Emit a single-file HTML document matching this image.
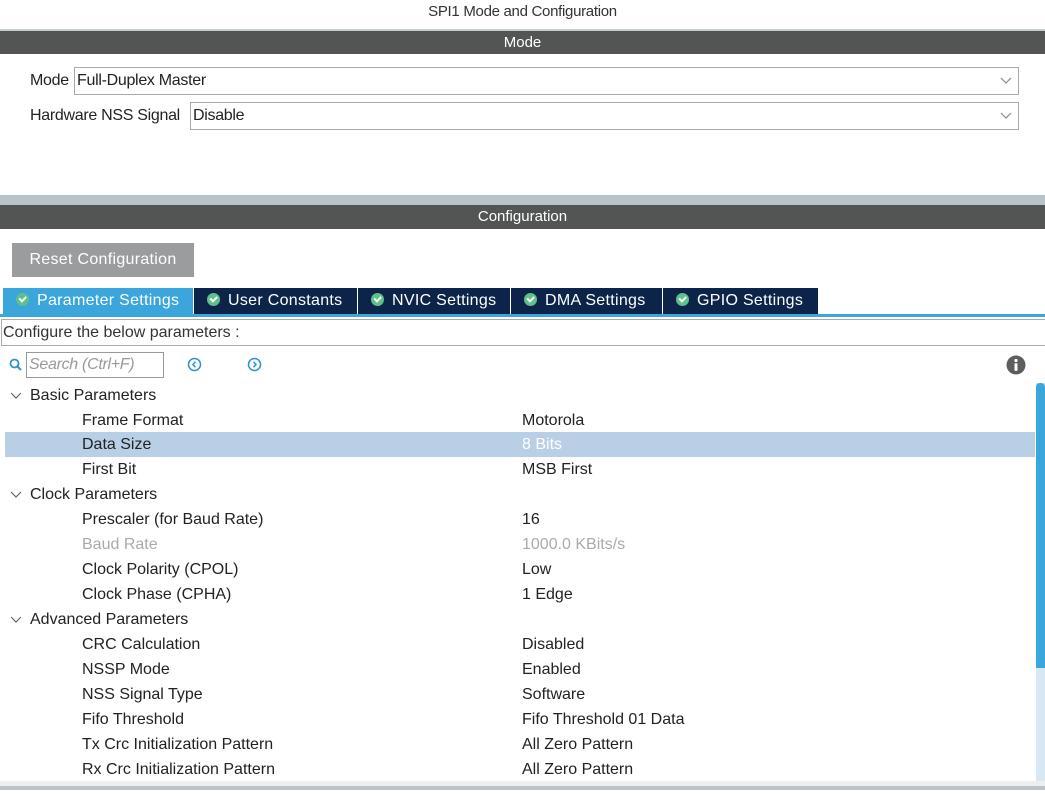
<!DOCTYPE html>
<html><head><meta charset="utf-8"><style>
*{margin:0;padding:0;box-sizing:border-box}
body{width:1045px;height:797px;background:#fff;font-family:"Liberation Sans",sans-serif;color:#222;position:relative;overflow:hidden;font-size:16px}
.a{position:absolute}
.bar{position:absolute;left:0;width:1045px;background:#535554;color:#fff;text-align:center;font-size:15px}
.sel{position:absolute;border:1px solid #a9a9a9;background:#fff;font-size:16px;padding-left:2px;line-height:25px;letter-spacing:-.3px}
.sel svg{position:absolute;right:6px;top:9px}
.tab{position:absolute;top:288px;height:26px;background:#0c2449;color:#fff;font-size:16px;line-height:26px;letter-spacing:.3px}
.tab i{display:inline-block;width:13px;height:13px;border-radius:50%;background:#5fc18a;vertical-align:-1px;margin:0 8px 0 13px;position:relative}
.tab i:after{content:"";position:absolute;left:3px;top:3px;width:5px;height:2.5px;border-left:2px solid #fff;border-bottom:2px solid #fff;transform:rotate(-45deg)}
.row{position:absolute;left:5px;width:1030px;height:25px;line-height:25px;font-size:16px}
.row .l{position:absolute;left:77px}
.row .v{position:absolute;left:517px}
.g .l{left:25px}
.g svg{position:absolute;left:5px;top:9px}
.dis{color:#aaa}
</style></head><body>
<div class="a" style="top:3px;width:1045px;text-align:center;font-size:15px;color:#333;letter-spacing:-.3px">SPI1 Mode and Configuration</div>
<div class="a" style="top:29px;left:0;width:1045px;height:2px;background:#c8cdd0"></div>
<div class="bar" style="top:31px;height:23px;line-height:23px">Mode</div>
<div class="a" style="left:30px;top:72px;letter-spacing:-.3px">Mode</div>
<div class="sel" style="left:74px;top:67px;width:945px;height:28px">Full-Duplex Master<svg width="12" height="8"><path d="M1 1L6 6L11 1" fill="none" stroke="#888" stroke-width="1.2"/></svg></div>
<div class="a" style="left:30px;top:107px;letter-spacing:-.3px">Hardware NSS Signal</div>
<div class="sel" style="left:190px;top:102px;width:829px;height:28px">Disable<svg width="12" height="8"><path d="M1 1L6 6L11 1" fill="none" stroke="#888" stroke-width="1.2"/></svg></div>
<div class="a" style="top:195px;left:0;width:1045px;height:10px;background:#b9c3ca"></div>
<div class="bar" style="top:205px;height:24px;line-height:24px">Configuration</div>
<div class="a" style="left:12px;top:243px;width:182px;height:34px;background:#9a9c9e;color:#fff;text-align:center;line-height:33px;letter-spacing:.3px">Reset Configuration</div>
<div class="tab" style="left:3px;width:190px;background:#3ba6db"><i></i>Parameter Settings</div>
<div class="tab" style="left:194px;width:163px"><i></i>User Constants</div>
<div class="tab" style="left:358px;width:152px"><i></i>NVIC Settings</div>
<div class="tab" style="left:511px;width:151px"><i></i>DMA Settings</div>
<div class="tab" style="left:663px;width:155px"><i></i>GPIO Settings</div>
<div class="a" style="top:314px;left:0;width:1045px;height:3px;background:#3ba6db"></div>
<div class="a" style="top:319px;left:1px;width:1050px;height:27px;border:1px solid #aaa;line-height:25px;padding-left:1px;color:#333">Configure the below parameters :</div>
<svg class="a" style="left:9px;top:358px" width="14" height="14"><circle cx="5.5" cy="5.5" r="4" fill="none" stroke="#2f8fd0" stroke-width="1.8"/><line x1="8.5" y1="8.5" x2="12" y2="12" stroke="#2f8fd0" stroke-width="2"/></svg>
<div class="a" style="left:26px;top:352px;width:138px;height:26px;border:1px solid #999;font-style:italic;color:#999;line-height:24px;padding-left:2px;letter-spacing:-.3px">Search (Ctrl+F)</div>
<svg class="a" style="left:187px;top:357px" width="15" height="15"><circle cx="7.5" cy="7.5" r="6" fill="none" stroke="#2f8fd0" stroke-width="1.5"/><path d="M8.5 4.8 L6 7.5 L8.5 10.2" fill="none" stroke="#2f8fd0" stroke-width="1.5"/></svg>
<svg class="a" style="left:247px;top:357px" width="15" height="15"><circle cx="7.5" cy="7.5" r="6" fill="none" stroke="#2f8fd0" stroke-width="1.5"/><path d="M6.5 4.8 L9 7.5 L6.5 10.2" fill="none" stroke="#2f8fd0" stroke-width="1.5"/></svg>
<svg class="a" style="left:1006px;top:355px" width="20" height="20"><circle cx="10" cy="10" r="9.5" fill="#5e5e5e"/><circle cx="10" cy="5.5" r="1.6" fill="#fff"/><rect x="8.5" y="8.3" width="3" height="7.5" fill="#fff"/></svg>
<div class="a" style="left:1036px;top:383px;width:9px;height:398px;background:#d8e7f4"></div>
<div class="a" style="left:1036px;top:383px;width:9px;height:285px;background:#3ba6db;border-radius:4px 4px 0 0"></div>
<div class="row g" style="top:383px"><svg width="12" height="8"><path d="M1 1L6 6L11 1" fill="none" stroke="#666" stroke-width="1.2"/></svg><span class="l">Basic Parameters</span></div>
<div class="row" style="top:408px"><span class="l">Frame Format</span><span class="v">Motorola</span></div>
<div class="row" style="top:432px;background:#b8cfe6"><span class="l">Data Size</span><span class="v" style="color:#fff">8 Bits</span></div>
<div class="row" style="top:457px"><span class="l">First Bit</span><span class="v">MSB First</span></div>
<div class="row g" style="top:482px"><svg width="12" height="8"><path d="M1 1L6 6L11 1" fill="none" stroke="#666" stroke-width="1.2"/></svg><span class="l">Clock Parameters</span></div>
<div class="row" style="top:507px"><span class="l">Prescaler (for Baud Rate)</span><span class="v">16</span></div>
<div class="row dis" style="top:532px"><span class="l">Baud Rate</span><span class="v">1000.0 KBits/s</span></div>
<div class="row" style="top:557px"><span class="l">Clock Polarity (CPOL)</span><span class="v">Low</span></div>
<div class="row" style="top:582px"><span class="l">Clock Phase (CPHA)</span><span class="v">1 Edge</span></div>
<div class="row g" style="top:607px"><svg width="12" height="8"><path d="M1 1L6 6L11 1" fill="none" stroke="#666" stroke-width="1.2"/></svg><span class="l">Advanced Parameters</span></div>
<div class="row" style="top:632px"><span class="l">CRC Calculation</span><span class="v">Disabled</span></div>
<div class="row" style="top:657px"><span class="l">NSSP Mode</span><span class="v">Enabled</span></div>
<div class="row" style="top:682px"><span class="l">NSS Signal Type</span><span class="v">Software</span></div>
<div class="row" style="top:707px"><span class="l">Fifo Threshold</span><span class="v">Fifo Threshold 01 Data</span></div>
<div class="row" style="top:732px"><span class="l">Tx Crc Initialization Pattern</span><span class="v">All Zero Pattern</span></div>
<div class="row" style="top:757px"><span class="l">Rx Crc Initialization Pattern</span><span class="v">All Zero Pattern</span></div>
<div class="a" style="top:781px;left:0;width:1045px;height:5px;background:#eee"></div>
<div class="a" style="top:786px;left:0;width:1045px;height:4px;background:#b9c3ca"></div>
</body></html>
